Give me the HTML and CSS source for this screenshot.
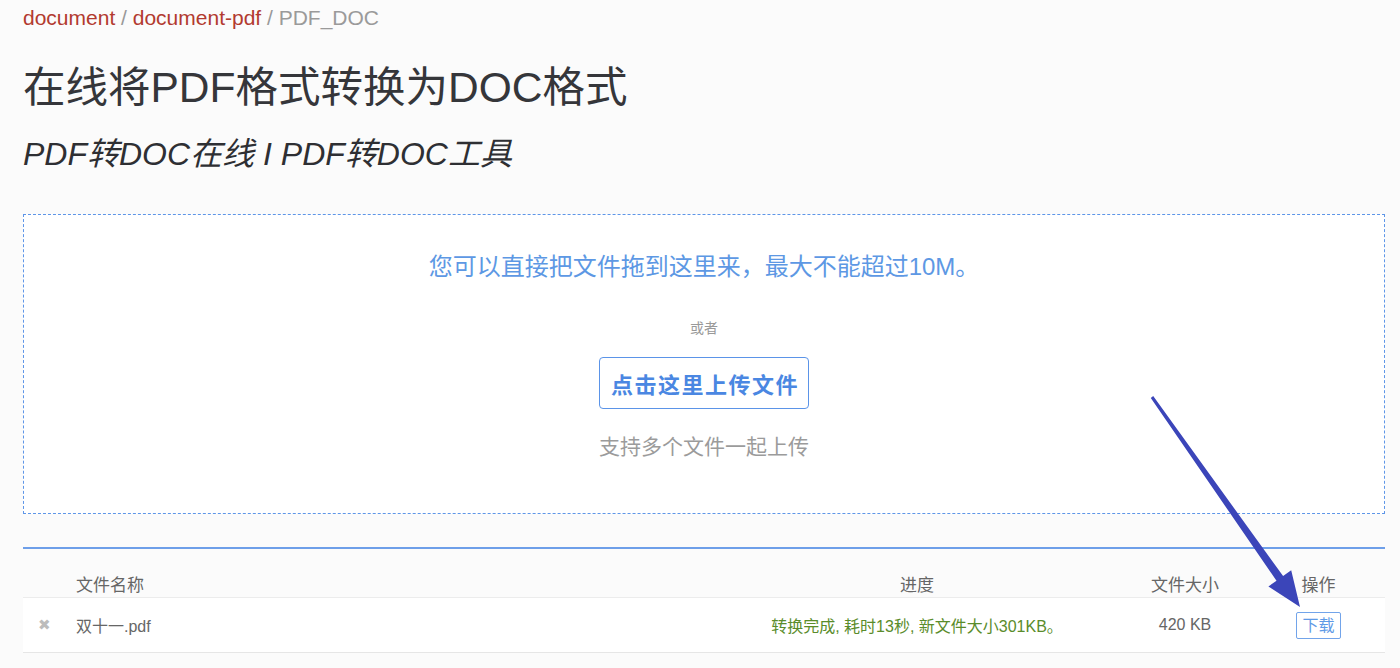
FILE: index.html
```html
<!DOCTYPE html>
<html lang="zh-CN">
<head>
<meta charset="utf-8">
<title>PDF转DOC</title>
<link rel="stylesheet" href="styles.css">
</head>
<body>
<div class="page">
  <nav class="crumbs">
    <a class="crumb-link" href="#">document</a><span class="sep"> / </span><a class="crumb-link" href="#">document-pdf</a><span class="sep"> / </span><span class="crumb-current">PDF_DOC</span>
  </nav>
  <h1 class="title">在线将PDF格式转换为DOC格式</h1>
  <h2 class="subtitle">PDF转DOC在线 I PDF转DOC工具</h2>

  <section class="dropzone">
    <p class="drop-hint">您可以直接把文件拖到这里来，最大不能超过10M。</p>
    <p class="drop-or">或者</p>
    <button class="upload-btn" type="button">点击这里上传文件</button>
    <p class="drop-multi">支持多个文件一起上传</p>
  </section>

  <section class="files">
    <div class="file-row file-head">
      <div class="c-icon"></div>
      <div class="c-name">文件名称</div>
      <div class="c-progress">进度</div>
      <div class="c-size">文件大小</div>
      <div class="c-action">操作</div>
    </div>
    <div class="file-row file-item">
      <div class="c-icon"><span class="remove">&#x2716;</span></div>
      <div class="c-name">双十一.pdf</div>
      <div class="c-progress status-ok">转换完成, 耗时13秒, 新文件大小301KB。</div>
      <div class="c-size">420 KB</div>
      <div class="c-action"><a class="dl-btn" href="#">下载</a></div>
    </div>
  </section>
</div>
<svg class="annotation" width="1400" height="668" viewBox="0 0 1400 668" aria-hidden="true">
  <polygon fill="#3b45b9" points="1153.2,396.1 1283.1,576.1 1291.2,570.3 1300,607 1268.4,586.5 1276.5,580.7 1150.8,397.9"/>
</svg>
</body>
</html>
```
FILE: styles.css
```css
html, body {
  margin: 0;
  padding: 0;
  background: #fbfbfb;
}
body {
  font-family: "Liberation Sans", "Noto Sans CJK SC", sans-serif;
  color: #333;
  width: 1400px;
  height: 668px;
  overflow: hidden;
  position: relative;
}
.page {
  padding: 6px 15px 0 23px;
}
.crumbs {
  font-size: 21px;
  line-height: 24px;
  color: #999;
}
.crumb-link {
  color: #b23a2f;
  text-decoration: none;
}
.sep { color: #999; }
.crumb-current { color: #9a9a9a; }

.title {
  margin: 30px 0 0;
  font-size: 42.5px;
  line-height: 56px;
  font-weight: 400;
  color: #35363a;
}
.subtitle {
  margin: 18px 0 0;
  font-size: 32px;
  line-height: 40px;
  font-weight: 400;
  font-style: italic;
  color: #2e2f33;
}

.dropzone {
  margin-top: 40px;
  height: 298px;
  border: 1px dashed #5e96e8;
  background: #fff;
  display: flex;
  flex-direction: column;
  align-items: center;
}
.drop-hint {
  margin: 38px 0 0;
  font-size: 24px;
  line-height: 28px;
  color: #5d98e4;
}
.drop-or {
  margin: 37px 0 0;
  font-size: 14px;
  line-height: 20px;
  color: #999;
}
.upload-btn {
  margin-top: 19px;
  width: 210px;
  height: 52px;
  border: 1px solid #5b94e8;
  border-radius: 4px;
  background: #fff;
  color: #4a87e2;
  font-family: "Liberation Sans", "Noto Sans CJK SC", sans-serif;
  font-size: 22px;
  font-weight: 700;
  letter-spacing: 1.5px;
  padding: 0 0 0 2px;
}
.drop-multi {
  margin: 23px 0 0;
  font-size: 21px;
  line-height: 30px;
  color: #9b9b9b;
}

.files {
  margin-top: 33px;
  border-top: 2px solid #6e9fe9;
}
.file-row {
  display: grid;
  grid-template-columns: 53px 640px 402px 134px 1fr;
  align-items: center;
  text-align: center;
}
.c-name { text-align: left; }
.file-head {
  height: 48px;
  align-items: end;
  font-size: 17px;
  color: #666;
  border-bottom: 1px solid #ececec;
}
.file-head > div { padding-bottom: 1px; }
.file-item {
  height: 54px;
  background: #fff;
  font-size: 16px;
  color: #666;
  border-bottom: 1px solid #e6e6e6;
}
.c-icon { text-align: left; padding-left: 15px; }
.remove {
  color: #bcbcbc;
  font-family: "DejaVu Sans", sans-serif;
  font-size: 15px;
}
.status-ok { color: #5a8c2b; }
.dl-btn {
  display: inline-block;
  border: 1px solid #72a4ea;
  border-radius: 2px;
  padding: 3px 5px;
  font-size: 16px;
  line-height: 19px;
  color: #5f9ae6;
  text-decoration: none;
  background: #fff;
}

.annotation {
  position: absolute;
  left: 0;
  top: 0;
  pointer-events: none;
}
```
